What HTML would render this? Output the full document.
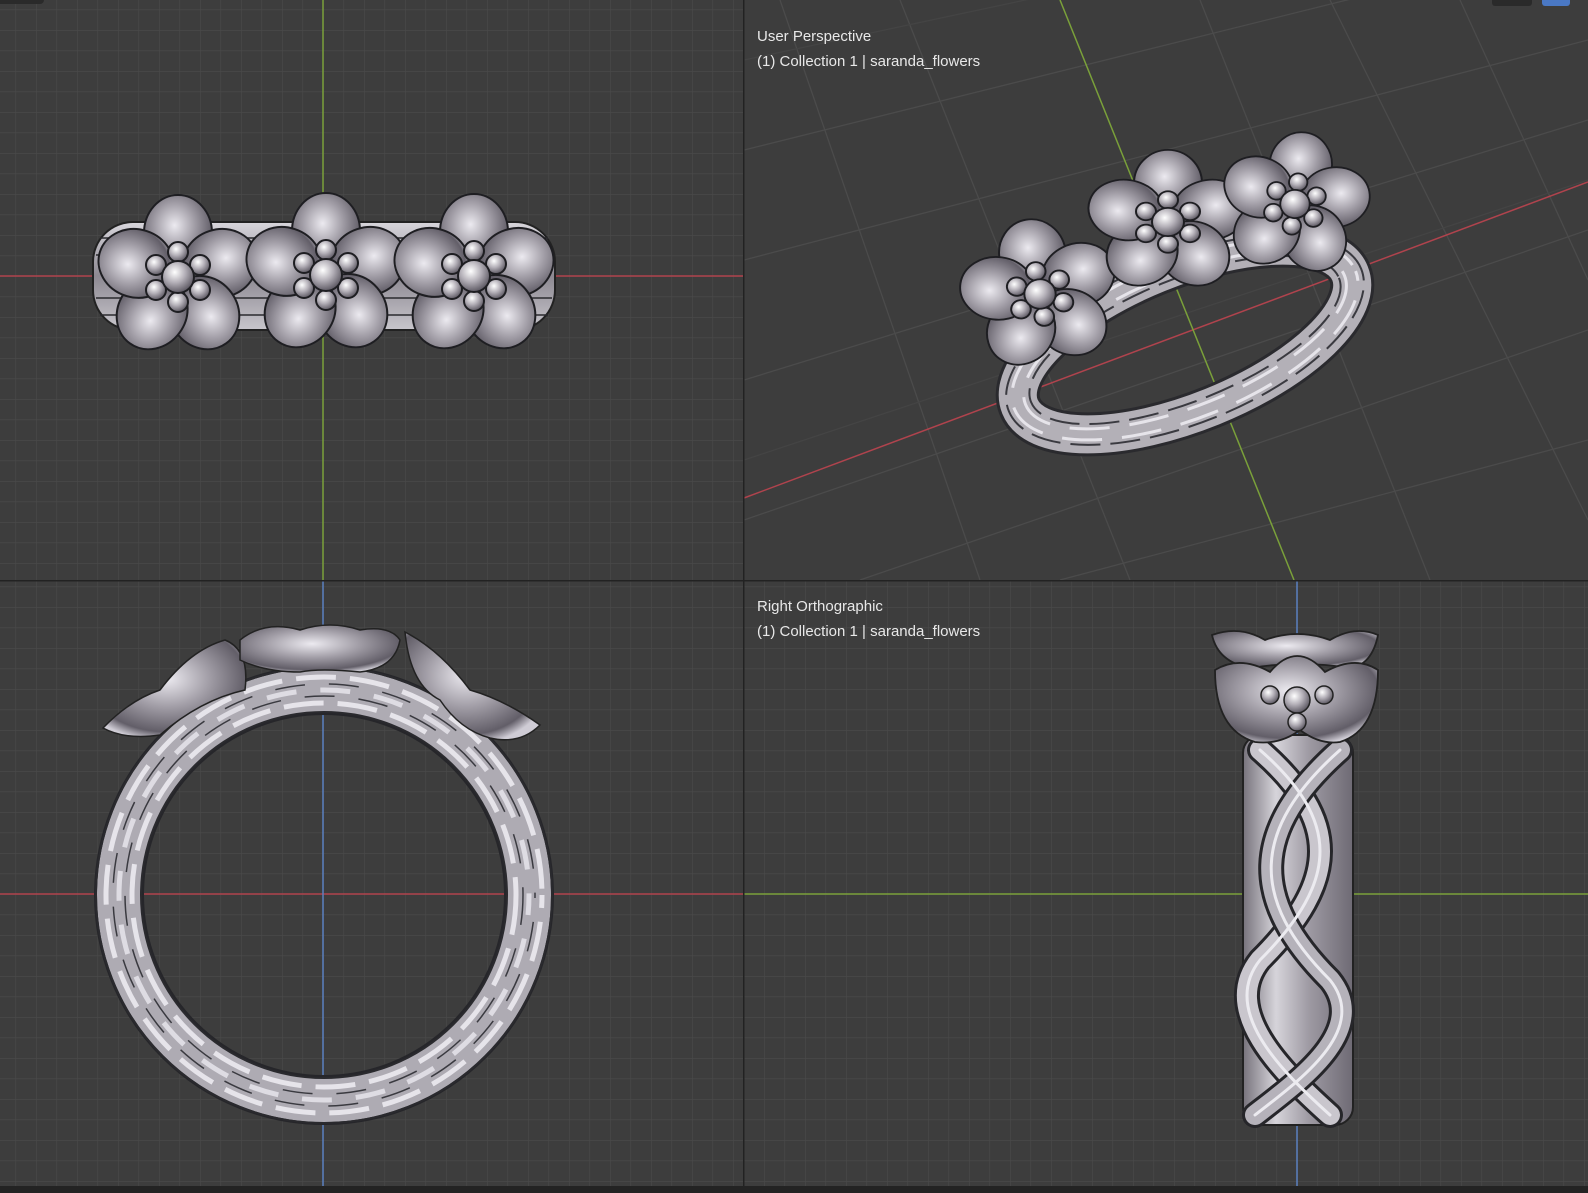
<!DOCTYPE html>
<html><head><meta charset="utf-8"><style>
html,body{margin:0;padding:0;background:#3d3d3d;width:1588px;height:1193px;overflow:hidden}
svg{display:block}
text{font-family:"Liberation Sans","DejaVu Sans",sans-serif;font-size:15px;fill:#e8e8e8}
</style></head><body>
<svg width="1588" height="1193" viewBox="0 0 1588 1193" xmlns="http://www.w3.org/2000/svg">
<defs>
<pattern id="g1" x="323" y="276" width="20.5" height="20.5" patternUnits="userSpaceOnUse"><path d="M0 0H20.5M0 0V20.5" stroke="#4a4a4a" stroke-width="1.2" fill="none"/></pattern>
<pattern id="g2" x="323" y="894" width="20.5" height="20.5" patternUnits="userSpaceOnUse"><path d="M0 0H20.5M0 0V20.5" stroke="#4a4a4a" stroke-width="1.2" fill="none"/></pattern>
<pattern id="g3" x="1297" y="894" width="20.5" height="20.5" patternUnits="userSpaceOnUse"><path d="M0 0H20.5M0 0V20.5" stroke="#4a4a4a" stroke-width="1.2" fill="none"/></pattern>
<radialGradient id="pet" cx="45%" cy="40%" r="65%"><stop offset="0" stop-color="#eceaf0"/><stop offset="0.45" stop-color="#a29ea7"/><stop offset="0.85" stop-color="#625e68"/><stop offset="1" stop-color="#cfccd5"/></radialGradient>
<radialGradient id="ball" cx="40%" cy="35%" r="65%"><stop offset="0" stop-color="#ffffff"/><stop offset="0.5" stop-color="#b4b0b8"/><stop offset="1" stop-color="#5e5a64"/></radialGradient>
<linearGradient id="band" x1="0" y1="0" x2="0" y2="1"><stop offset="0" stop-color="#d8d6dc"/><stop offset="0.5" stop-color="#8d8992"/><stop offset="1" stop-color="#c8c6cc"/></linearGradient>
<linearGradient id="vband" x1="0" y1="0" x2="1" y2="0"><stop offset="0" stop-color="#77737c"/><stop offset="0.3" stop-color="#d6d4da"/><stop offset="0.6" stop-color="#9e9aa3"/><stop offset="1" stop-color="#6e6a74"/></linearGradient>
<g id="fl">
 <g stroke="#1e1e22" stroke-width="2">
  <ellipse cx="0" cy="-44" rx="34" ry="38" fill="url(#pet)"/>
  <ellipse cx="0" cy="-44" rx="34" ry="38" fill="url(#pet)" transform="rotate(72)"/>
  <ellipse cx="0" cy="-44" rx="34" ry="38" fill="url(#pet)" transform="rotate(144)"/>
  <ellipse cx="0" cy="-44" rx="34" ry="38" fill="url(#pet)" transform="rotate(216)"/>
  <ellipse cx="0" cy="-44" rx="34" ry="38" fill="url(#pet)" transform="rotate(288)"/>
  <circle cx="0" cy="-25" r="10" fill="url(#ball)"/>
  <circle cx="22" cy="-12" r="10" fill="url(#ball)"/>
  <circle cx="22" cy="13" r="10" fill="url(#ball)"/>
  <circle cx="0" cy="25" r="10" fill="url(#ball)"/>
  <circle cx="-22" cy="13" r="10" fill="url(#ball)"/>
  <circle cx="-22" cy="-12" r="10" fill="url(#ball)"/>
  <circle cx="0" cy="0" r="16" fill="url(#ball)"/>
 </g>
</g>
<clipPath id="c1"><rect x="0" y="0" width="743" height="580"/></clipPath>
<clipPath id="c2"><rect x="744" y="0" width="844" height="580"/></clipPath>
<clipPath id="c3"><rect x="0" y="581" width="743" height="605"/></clipPath>
<clipPath id="c4"><rect x="744" y="581" width="844" height="605"/></clipPath>
</defs>

<rect width="1588" height="1193" fill="#3d3d3d"/>
<rect x="0" y="0" width="743" height="580" fill="url(#g1)"/>
<rect x="0" y="581" width="743" height="605" fill="url(#g2)"/>
<rect x="744" y="581" width="844" height="605" fill="url(#g3)"/>

<g clip-path="url(#c2)" stroke="#4b4b4b" stroke-width="1.3" fill="none">
 <path d="M744 150 L1588 -60M744 260 L1588 40M744 380 L1588 120M744 520 L1588 230M860 580 L1588 330M1060 580 L1588 440"/>
 <path d="M900 0 L1130 580M780 0 L980 580M1200 0 L1430 580M1330 0 L1588 520M1460 0 L1588 280"/>
 <path d="M744 60 L1588 -120M744 460 L1588 180" stroke="#444"/>
</g>

<line x1="0" y1="276" x2="743" y2="276" stroke="#b0434d" stroke-width="1.5"/>
<line x1="323" y1="0" x2="323" y2="580" stroke="#7aa03a" stroke-width="1.5"/>
<line x1="744" y1="498" x2="1588" y2="182" stroke="#b0434d" stroke-width="1.5"/>
<line x1="1060" y1="0" x2="1294" y2="580" stroke="#7aa03a" stroke-width="1.5"/>
<line x1="0" y1="894" x2="743" y2="894" stroke="#b0434d" stroke-width="1.5"/>
<line x1="323" y1="581" x2="323" y2="1186" stroke="#5a80c0" stroke-width="1.5"/>
<line x1="744" y1="894" x2="1588" y2="894" stroke="#7aa03a" stroke-width="1.5"/>
<line x1="1297" y1="581" x2="1297" y2="1186" stroke="#5a80c0" stroke-width="1.5"/>

<rect x="743" y="0" width="1.5" height="1186" fill="#222"/>
<rect x="0" y="580" width="1588" height="1.5" fill="#222"/>
<rect x="0" y="1186" width="1588" height="7" fill="#232323"/>

<rect x="-6" y="-8" width="50" height="12" rx="4" fill="#2a2a2a"/>
<rect x="1492" y="-6" width="40" height="12" rx="3" fill="#2a2a2a"/>
<rect x="1542" y="-6" width="28" height="12" rx="3" fill="#4a78c4"/>

<text x="757" y="41">User Perspective</text>
<text x="757" y="66">(1) Collection 1 | saranda_flowers</text>
<text x="757" y="611">Right Orthographic</text>
<text x="757" y="636">(1) Collection 1 | saranda_flowers</text>

<g clip-path="url(#c1)">
 <rect x="93" y="222" width="462" height="108" rx="40" fill="url(#band)" stroke="#222" stroke-width="2"/>
 <g stroke="#2a2a2e" stroke-width="1.5" fill="none"><path d="M100 238H548M96 255H552M96 298H552M100 315H548"/></g>
 <use href="#fl" transform="translate(178,277)"/>
 <use href="#fl" transform="translate(326,275)"/>
 <use href="#fl" transform="translate(474,276)"/>
</g>

<g clip-path="url(#c2)">
 <ellipse cx="1185" cy="340" rx="178" ry="72" transform="rotate(-22 1185 340)" fill="none" stroke="#2a2a2e" stroke-width="44"/>
 <ellipse cx="1185" cy="340" rx="178" ry="72" transform="rotate(-22 1185 340)" fill="none" stroke="#b3b0b7" stroke-width="38"/>
 <ellipse cx="1185" cy="340" rx="166" ry="61" transform="rotate(-22 1185 340)" fill="none" stroke="#3a3a40" stroke-width="2" stroke-dasharray="30 10"/>
 <ellipse cx="1185" cy="340" rx="190" ry="83" transform="rotate(-22 1185 340)" fill="none" stroke="#3a3a40" stroke-width="2" stroke-dasharray="30 10" stroke-dashoffset="18"/>
 <ellipse cx="1185" cy="340" rx="172" ry="66" transform="rotate(-22 1185 340)" fill="none" stroke="#e6e4ea" stroke-width="3" stroke-dasharray="40 20"/>
 <ellipse cx="1185" cy="340" rx="184" ry="78" transform="rotate(-22 1185 340)" fill="none" stroke="#e6e4ea" stroke-width="3" stroke-dasharray="40 20" stroke-dashoffset="30"/>
 <use href="#fl" transform="translate(1040,294) scale(0.98,0.92) rotate(-10)"/>
 <use href="#fl" transform="translate(1168,222) scale(1,0.88)"/>
 <use href="#fl" transform="translate(1295,204) scale(0.92,0.88) rotate(8)"/>
</g>

<g clip-path="url(#c3)">
 <circle cx="324" cy="895" r="205" fill="none" stroke="#26262a" stroke-width="50"/>
 <circle cx="324" cy="895" r="205" fill="none" stroke="#aeabb3" stroke-width="44"/>
 <circle cx="324" cy="895" r="192" fill="none" stroke="#e6e4ea" stroke-width="5" stroke-dasharray="40 14"/>
 <circle cx="324" cy="895" r="218" fill="none" stroke="#e6e4ea" stroke-width="5" stroke-dasharray="40 14" stroke-dashoffset="27"/>
 <circle cx="324" cy="895" r="205" fill="none" stroke="#dedce3" stroke-width="5" stroke-dasharray="30 24" stroke-dashoffset="10"/>
 <circle cx="324" cy="895" r="199" fill="none" stroke="#3a3a40" stroke-width="1.5" stroke-dasharray="30 24"/>
 <circle cx="324" cy="895" r="211" fill="none" stroke="#3a3a40" stroke-width="1.5" stroke-dasharray="30 24" stroke-dashoffset="27"/>
 <circle cx="324" cy="895" r="183" fill="none" stroke="#2a2a2e" stroke-width="2"/>
 <circle cx="324" cy="895" r="228" fill="none" stroke="#2a2a2e" stroke-width="2"/>
 <g fill="url(#pet)" stroke="#222" stroke-width="1.5">
  <path d="M103 728 Q130 700 160 690 Q190 650 225 640 Q250 650 245 690 Q200 700 160 735 Q125 740 103 728Z"/>
  <path d="M240 640 Q265 620 300 630 Q330 620 360 630 Q390 625 400 640 Q395 668 360 672 Q320 668 300 672 Q265 672 240 660Z"/>
  <path d="M405 632 Q440 650 470 690 Q505 700 540 725 Q520 745 490 738 Q460 730 440 700 Q410 685 405 632Z"/>
 </g>
</g>

<g clip-path="url(#c4)">
 <rect x="1243" y="735" width="110" height="390" rx="18" fill="url(#vband)" stroke="#222" stroke-width="2"/>
 <g fill="none" stroke-linecap="round">
  <path d="M1260 750 C1340 820 1340 880 1260 960 C1220 1010 1280 1070 1330 1115" stroke="#26262a" stroke-width="26"/>
  <path d="M1260 750 C1340 820 1340 880 1260 960 C1220 1010 1280 1070 1330 1115" stroke="#c9c6cd" stroke-width="20"/>
  <path d="M1340 750 C1250 830 1250 900 1330 980 C1370 1030 1300 1080 1255 1115" stroke="#26262a" stroke-width="26"/>
  <path d="M1340 750 C1250 830 1250 900 1330 980 C1370 1030 1300 1080 1255 1115" stroke="#b5b2ba" stroke-width="20"/>
  <path d="M1340 750 C1250 830 1250 900 1330 980 C1370 1030 1300 1080 1255 1115" stroke="#ecebf0" stroke-width="3"/>
  <path d="M1260 750 C1340 820 1340 880 1260 960 C1220 1010 1280 1070 1330 1115" stroke="#ecebf0" stroke-width="3"/>
 </g>
 <g fill="url(#pet)" stroke="#222" stroke-width="1.8">
  <path d="M1212 635 Q1240 625 1265 640 Q1297 628 1330 640 Q1355 625 1378 635 Q1372 665 1350 668 Q1300 660 1250 668 Q1218 662 1212 635Z"/>
  <path d="M1215 670 Q1240 655 1270 672 Q1297 640 1325 672 Q1355 655 1378 670 Q1378 730 1340 742 Q1320 745 1300 730 Q1280 745 1255 742 Q1215 730 1215 670Z"/>
 </g>
 <g stroke="#222" stroke-width="1.5" fill="url(#ball)">
  <circle cx="1297" cy="700" r="13"/><circle cx="1270" cy="695" r="9"/><circle cx="1324" cy="695" r="9"/><circle cx="1297" cy="722" r="9"/>
 </g>
</g>
</svg>
</body></html>
